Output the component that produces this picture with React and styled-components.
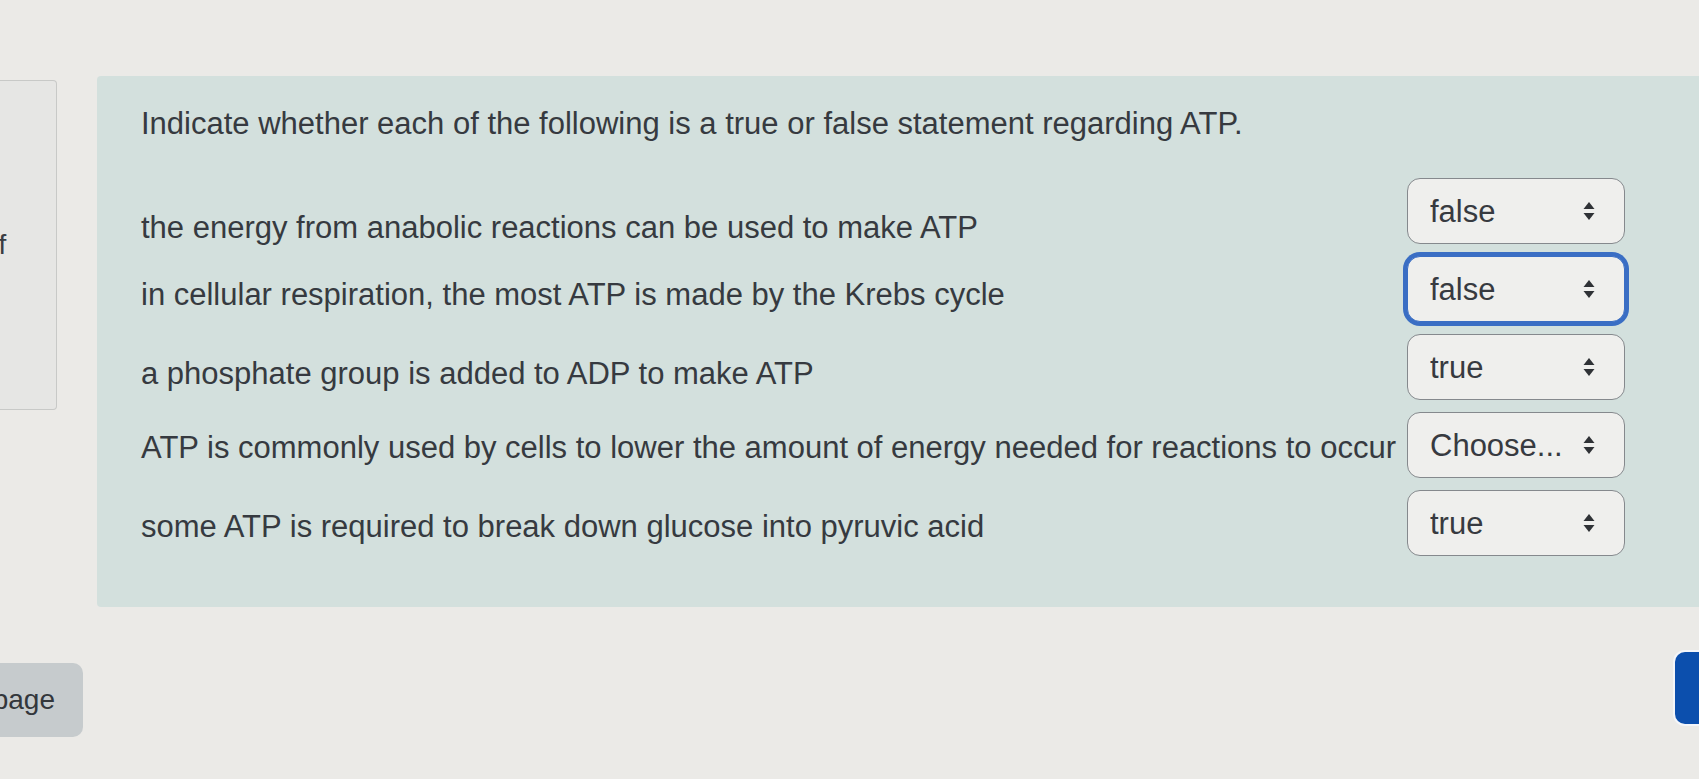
import React from 'react'
import styled, { createGlobalStyle } from 'styled-components'

const Global = createGlobalStyle`
  html, body {
    margin: 0;
    padding: 0;
    background: #ebeae7;
    overflow: hidden;
  }
  body {
    font-family: "Liberation Sans", Arial, sans-serif;
    color: #363a40;
  }
`

const Page = styled.div`
  width: 1699px;
  height: 779px;
  padding-top: 76px;
  box-sizing: border-box;
  display: flex;
  flex-direction: column;
`

const Top = styled.div`
  display: grid;
  grid-template-columns: 57px 1fr;
  column-gap: 40px;
  align-items: start;
`

const NavCard = styled.div`
  margin-top: 4px;
  height: 328px;
  background: #e6e6e4;
  border: 1px solid #c8c9c7;
  border-left: none;
  border-radius: 0 4px 4px 0;
  overflow: hidden;
  font-size: 28px;
  color: #3a3d42;
  display: flex;
  flex-direction: column;
  justify-content: center;
`

const NavText = styled.span`
  margin-left: -17px;
  line-height: 1;
`

const Panel = styled.section`
  background: #d3e0dd;
  border-radius: 4px 0 0 4px;
  padding: 30px 74px 50px 44px;
`

const Title = styled.h2`
  margin: 0 0 35px;
  font-size: 31px;
  font-weight: 400;
  line-height: 36px;
  color: #363a40;
`

const Rows = styled.div`
  display: flex;
  flex-direction: column;
  gap: 10px;
`

const Row = styled.div`
  display: flex;
  align-items: center;
  justify-content: space-between;
  gap: 4px;
  height: 68px;
`

const Label = styled.span`
  font-size: 31px;
  line-height: 36px;
  white-space: nowrap;
  padding-top: ${p => p.$shift}px;
`

const SelectWrap = styled.div`
  position: relative;
  width: 218px;
  height: 66px;
  flex: none;
`

const Select = styled.select`
  appearance: none;
  -webkit-appearance: none;
  width: 100%;
  height: 100%;
  box-sizing: border-box;
  background: #efefed;
  border: 1.5px solid #85898d;
  border-radius: 13px;
  padding: 0 50px 0 22px;
  font-family: "Liberation Sans", Arial, sans-serif;
  font-size: 31px;
  color: #373a40;
  outline: none;
  box-shadow: ${p => (p.$focused ? '0 0 0 4px #3a6ec4' : 'none')};
  border-color: ${p => (p.$focused ? '#3a6ec4' : '#85898d')};
`

const Arrows = styled.svg`
  position: absolute;
  right: 30px;
  top: 50%;
  margin-top: -10px;
  pointer-events: none;
`

const Footer = styled.div`
  margin-top: 56px;
  display: flex;
  justify-content: space-between;
  align-items: center;
`

const PrevButton = styled.button`
  margin-left: -144px;
  height: 74px;
  padding: 0 28px 0 20px;
  background: #c6cbcd;
  border: none;
  border-radius: 0 10px 10px 0;
  font-family: "Liberation Sans", Arial, sans-serif;
  font-size: 28px;
  color: #33373c;
`

const NextButton = styled.button`
  margin-top: -24px;
  margin-right: -126px;
  width: 150px;
  height: 72px;
  padding-left: 40px;
  background: #0c4fad;
  border: none;
  border-radius: 10px;
  font-family: "Liberation Sans", Arial, sans-serif;
  font-size: 28px;
  color: #fff;
  box-shadow: 0 0 0 2px #f4f6fa;
`

const items = [
  { text: 'the energy from anabolic reactions can be used to make ATP', value: 'false', shift: 34 },
  { text: 'in cellular respiration, the most ATP is made by the Krebs cycle', value: 'false', focused: true, shift: 12 },
  { text: 'a phosphate group is added to ADP to make ATP', value: 'true', shift: 14 },
  { text: 'ATP is commonly used by cells to lower the amount of energy needed for reactions to occur', value: '', shift: 6 },
  { text: 'some ATP is required to break down glucose into pyruvic acid', value: 'true', shift: 8 },
]

const UpDown = () => (
  <Arrows width="12" height="20" viewBox="0 0 12 20">
    <path d="M6 1 L11.5 8 H0.5 Z" fill="#2f3236" />
    <path d="M6 19 L11.5 12 H0.5 Z" fill="#2f3236" />
  </Arrows>
)

const App = () => (
  <>
    <Global />
    <Page>
      <Top>
        <NavCard>
          <NavText>of</NavText>
        </NavCard>
        <Panel>
          <Title>Indicate whether each of the following is a true or false statement regarding ATP.</Title>
          <Rows>
            {items.map((it, i) => (
              <Row key={i}>
                <Label $shift={it.shift}>{it.text}</Label>
                <SelectWrap>
                  <Select defaultValue={it.value} $focused={it.focused}>
                    <option value="">Choose...</option>
                    <option value="true">true</option>
                    <option value="false">false</option>
                  </Select>
                  <UpDown />
                </SelectWrap>
              </Row>
            ))}
          </Rows>
        </Panel>
      </Top>
      <Footer>
        <PrevButton>Previous page</PrevButton>
        <NextButton>Next page</NextButton>
      </Footer>
    </Page>
  </>
)

export default App
